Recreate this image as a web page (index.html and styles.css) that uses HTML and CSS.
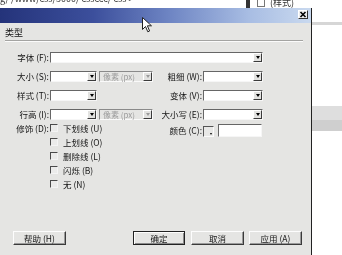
FILE: index.html
```html
<!DOCTYPE html>
<html lang="zh">
<head>
<meta charset="utf-8">
<link rel="stylesheet" href="styles.css">
</head>
<body>
<div class="page">
  <div class="top">
    <div class="crumbs">g/ /www/css/3000/ cssccc/ css &gt;</div>
    <div class="darkbar"></div>
    <div class="treeitem"><span class="minus"></span>(样式)</div>
  </div>
  <div class="main">
    <div class="dialog">
      <div class="titlebar">
        <div class="close">
          <svg width="8" height="7" viewBox="0 0 8 7"><path d="M1.5 1 L6.5 6 M6.5 1 L1.5 6" stroke="#000" stroke-width="1.6"/></svg>
        </div>
      </div>
      <div class="body">
        <div class="category">类型</div>
        <div class="sep"></div>

        <div class="grid rows">
          <div class="lbl">字体 (F):</div>
          <div class="sel wide"><span class="arr"></span></div>

          <div class="lbl">大小 (S):</div>
          <div class="sel"><span class="arr"></span></div>
          <div class="sel unit disabled"><span class="val">像素 (px)</span><span class="arr"></span></div>
          <div class="lbl">粗细 (W):</div>
          <div class="sel"><span class="arr"></span></div>

          <div class="lbl">样式 (T):</div>
          <div class="sel"><span class="arr"></span></div>
          <div></div>
          <div class="lbl">变体 (V):</div>
          <div class="sel"><span class="arr"></span></div>

          <div class="lbl">行高 (I):</div>
          <div class="sel"><span class="arr"></span></div>
          <div class="sel unit disabled"><span class="val">像素 (px)</span><span class="arr"></span></div>
          <div class="lbl">大小写 (E):</div>
          <div class="sel"><span class="arr"></span></div>
        </div>

        <div class="grid deco">
          <div class="lbl deco-lbl">修饰 (D):</div>
          <div class="checks">
            <div class="chk"><span class="box"></span>下划线 (U)</div>
            <div class="chk"><span class="box"></span>上划线 (O)</div>
            <div class="chk"><span class="box"></span>删除线 (L)</div>
            <div class="chk"><span class="box"></span>闪烁 (B)</div>
            <div class="chk"><span class="box"></span>无 (N)</div>
          </div>
          <div class="lbl color-lbl">颜色 (C):</div>
          <div class="color">
            <span class="swatch"><span class="tri"></span></span>
            <span class="txt"></span>
          </div>
        </div>

        <div class="footer">
          <div class="btn">帮助 (H)</div>
          <div class="btn default ok">确定</div>
          <div class="btn">取消</div>
          <div class="btn apply">应用 (A)</div>
        </div>
      </div>
    </div>
    <div class="side">
      <div class="s1"></div>
      <div class="s2"></div>
      <div class="s3"></div>
      <div class="s4"></div>
      <div class="s5"></div>
    </div>
  </div>
  <svg class="cursor" width="11" height="17" viewBox="0 0 11 17"><path d="M0.5 0.5 L0.5 12.5 L3.5 9.5 L5.8 14.8 L7.6 14 L5.4 8.8 L9.5 8.8 Z" fill="#fff" stroke="#222" stroke-width="1"/></svg>
</div>
</body>
</html>
```

FILE: styles.css
```css
html, body {
  margin: 0;
  padding: 0;
  background: #fff;
}
.page {
  position: relative;
  width: 342px;
  height: 255px;
  overflow: hidden;
  font-family: "Noto Sans CJK SC", "Noto Sans", sans-serif;
  font-size: 9px;
  color: #151515;
  filter: blur(0.3px);
}
.top {
  height: 8px;
  display: flex;
  overflow: hidden;
}
.crumbs {
  width: 246px;
  margin-top: -7px;
  font-size: 9px;
  line-height: 11px;
  color: #333;
  white-space: nowrap;
  overflow: hidden;
}
.darkbar {
  width: 4px;
  background: #333;
}
.treeitem {
  margin-left: 7px;
  margin-top: -3px;
  line-height: 11px;
  color: #333;
  display: flex;
  align-items: center;
  gap: 5px;
}
.minus {
  width: 6px;
  height: 6px;
  border: 1px solid #777;
  background: #fff;
}
.main {
  display: flex;
  height: 247px;
}
.dialog {
  width: 311px;
  border-right: 1px solid #222;
  display: flex;
  flex-direction: column;
  background: #e5e5e3;
}
.titlebar {
  height: 15px;
  background: linear-gradient(90deg, #24337a 0%, #3c4f9c 30%, #6f86c4 55%, #a8bde3 80%, #c9d9ef 100%);
  display: flex;
  justify-content: flex-end;
  align-items: flex-start;
}
.close {
  width: 10px;
  height: 9px;
  margin-top: 2px;
  margin-right: 3px;
  box-sizing: border-box;
  background: #ececec;
  border: 1px solid;
  border-color: #fff #333 #333 #fff;
  display: flex;
  align-items: center;
  justify-content: center;
}
.body {
  flex: 1;
  display: flex;
  flex-direction: column;
}
.category {
  padding: 4px 0 0 5px;
  line-height: 11px;
  height: 11px;
  margin-bottom: 2px;
}
.sep {
  margin: 0 8px 0 5px;
  border-top: 1px solid #a4a4a2;
  border-bottom: 1px solid #fbfbfb;
  height: 0;
}
.grid {
  display: grid;
  grid-template-columns: 50px 47px 56px 50px 60px;
}
.rows {
  margin-top: 10px;
  grid-auto-rows: 11px;
  row-gap: 8px;
}
.lbl {
  text-align: right;
  padding-right: 1px;
  line-height: 11px;
  white-space: nowrap;
  font-size: 8.5px;
}
.sel {
  display: flex;
  height: 11px;
  box-sizing: border-box;
  border: 1px solid;
  border-color: #666 #f6f6f6 #f6f6f6 #666;
  background: #fff;
}
.sel.wide {
  grid-column: 2 / 6;
}
.sel.unit {
  margin-left: 2px;
}
.sel.disabled {
  background: #e5e5e3;
  border-color: #8a8a8a #fafafa #fafafa #8a8a8a;
}
.val {
  flex: 1;
  padding-left: 3px;
  line-height: 9px;
  font-size: 8px;
  color: #9c9c9c;
  white-space: nowrap;
}
.arr {
  width: 9px;
  margin-left: auto;
  box-sizing: border-box;
  background: #e2e2e0;
  border: 1px solid;
  border-color: #fff #3a3a3a #3a3a3a #fff;
  display: flex;
  align-items: center;
  justify-content: center;
}
.arr::after {
  content: "";
  width: 0;
  height: 0;
  border-left: 2.5px solid transparent;
  border-right: 2.5px solid transparent;
  border-top: 3px solid #000;
}
.disabled .arr::after {
  border-top-color: #9a9a9a;
}
.deco {
  margin-top: 1px;
  align-items: start;
}
.deco-lbl {
  line-height: 14px;
}
.checks {
  grid-column: 2 / 4;
  display: flex;
  flex-direction: column;
}
.chk {
  height: 14px;
  line-height: 14px;
  display: flex;
  align-items: center;
  gap: 5px;
  font-size: 8.5px;
  white-space: nowrap;
}
.box {
  width: 8px;
  height: 8px;
  box-sizing: border-box;
  border: 1px solid;
  border-color: #4a4a4a #f4f4f4 #f4f4f4 #4a4a4a;
  background: #ebebea;
}
.color-lbl {
  margin-top: 3px;
  line-height: 13px;
}
.color {
  margin-top: 3px;
  display: flex;
  align-items: flex-end;
  gap: 4px;
}
.swatch {
  width: 11px;
  height: 11px;
  box-sizing: border-box;
  border: 1px solid;
  border-color: #555 #fafafa #fafafa #555;
  background: #e8e8e6;
  display: flex;
  align-items: flex-end;
  justify-content: flex-end;
  padding: 0 1px 1px 0;
}
.tri {
  width: 0;
  height: 0;
  border-left: 1.5px solid transparent;
  border-right: 1.5px solid transparent;
  border-top: 2px solid #000;
}
.txt {
  width: 44px;
  height: 13px;
  box-sizing: border-box;
  border: 1px solid;
  border-color: #666 #f6f6f6 #f6f6f6 #666;
  background: #fff;
}
.footer {
  margin-top: 40px;
  display: flex;
  padding: 0 9px 0 13px;
  gap: 6px;
}
.btn {
  width: 53px;
  height: 14px;
  box-sizing: border-box;
  border: 1px solid;
  border-color: #fdfdfd #3a3a3a #3a3a3a #fdfdfd;
  box-shadow: inset -1px -1px #9a9a9a;
  background: #e5e5e3;
  text-align: center;
  line-height: 12px;
  font-size: 8.5px;
  white-space: nowrap;
}
.btn.ok {
  margin-left: auto;
  width: 52px;
}
.btn.default {
  border-color: #222;
  box-shadow: inset 1px 1px #fdfdfd, inset -1px -1px #8a8a8a;
}
.btn.apply {
  margin-left: -1px;
}
.side {
  flex: 1;
  display: flex;
  flex-direction: column;
}
.s1 { height: 14px; }
.s2 { height: 3px; background: #d6d6d6; }
.s3 { height: 81px; }
.s4 { height: 14px; background: #dedede; }
.s5 { height: 11px; background: #cfcfcf; }
.cursor {
  position: absolute;
  left: 142px;
  top: 17px;
}
```
